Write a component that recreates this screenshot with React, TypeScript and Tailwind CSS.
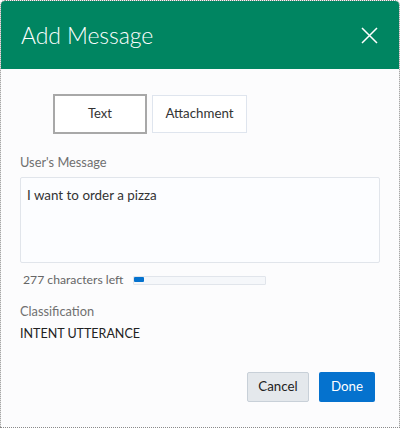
import { useState } from 'react';

const font = { fontFamily: 'Lato, "Liberation Sans", Arial, sans-serif' };

export default function App() {
  const [tab, setTab] = useState<'text' | 'attachment'>('text');
  const [message, setMessage] = useState('I want to order a pizza');
  const max = 300;
  const left = max - message.length;

  return (
    <div style={font} className="w-[400px] h-[428px] flex flex-col bg-[#fcfcfd] border border-dotted border-[#8a8a8a] rounded-t-[5px] overflow-hidden">
      <div className="h-[68px] shrink-0 bg-[#008561] flex items-center justify-between pl-5 pr-5">
        <h1 className="text-[23px] text-white font-light tracking-[-0.1px]">Add Message</h1>
        <button className="text-white w-5 h-5 flex items-center justify-center">
          <svg width="17" height="17" viewBox="0 0 17 17" fill="none" stroke="currentColor" strokeWidth="1.5">
            <path d="M1 1 L16 16 M16 1 L1 16" />
          </svg>
        </button>
      </div>

      <div className="flex flex-col px-[19px] pt-[25px]">
        <div className="flex gap-[5px] ml-[33px] items-center">
          <button
            onClick={() => setTab('text')}
            className={`w-[94px] h-[40px] text-[13px] text-[#333] bg-white ${tab === 'text' ? 'border-2 border-[#a8a8a8]' : 'border border-[#dfe5ee]'}`}
          >
            Text
          </button>
          <button
            onClick={() => setTab('attachment')}
            className={`w-[95px] h-[38px] text-[13.3px] text-[#333] bg-white ${tab === 'attachment' ? 'border-2 border-[#a8a8a8]' : 'border border-[#dfe5ee]'}`}
          >
            Attachment
          </button>
        </div>

        <label className="mt-[18px] text-[12.8px] leading-5 text-[#707070]">User's Message</label>
        <textarea
          value={message}
          onChange={(e) => setMessage(e.target.value.slice(0, max))}
          className="mt-[5px] w-[360px] h-[86px] resize-none bg-[#fcfdff] border border-[#e1e5eb] rounded-[2px] px-[6px] py-[5px] text-[13.4px] leading-6 text-[#333] outline-none"
        />

        <div className="mt-[7px] flex items-center gap-[10px] pl-[3px]">
          <span className="text-[12.2px] leading-5 text-[#666]">{left} characters left</span>
          <div className="w-[133px] h-[9px] border border-[#e1e5eb] bg-[#f5f7fa] rounded-[1px] relative">
            <div className="absolute left-0 top-0 h-[5px] bg-[#0572ce] rounded-[1px]" style={{ width: `${Math.max(8, (message.length / max) * 131)}px` }} />
          </div>
        </div>

        <div className="mt-[11px] text-[12.8px] leading-5 text-[#707070]">Classification</div>
        <div className="mt-[3px] text-[12.5px] leading-5 text-[#222]">INTENT UTTERANCE</div>

        <div className="mt-[28px] flex justify-end gap-[10px] pr-[5px]">
          <button className="w-[62px] h-[30px] bg-[#e4e8ec] border border-[#c8d0d8] rounded-[2px] text-[13.3px] text-[#222]">Cancel</button>
          <button className="w-[56px] h-[30px] bg-[#0572ce] rounded-[2px] text-[13.3px] text-white">Done</button>
        </div>
      </div>
    </div>
  );
}
